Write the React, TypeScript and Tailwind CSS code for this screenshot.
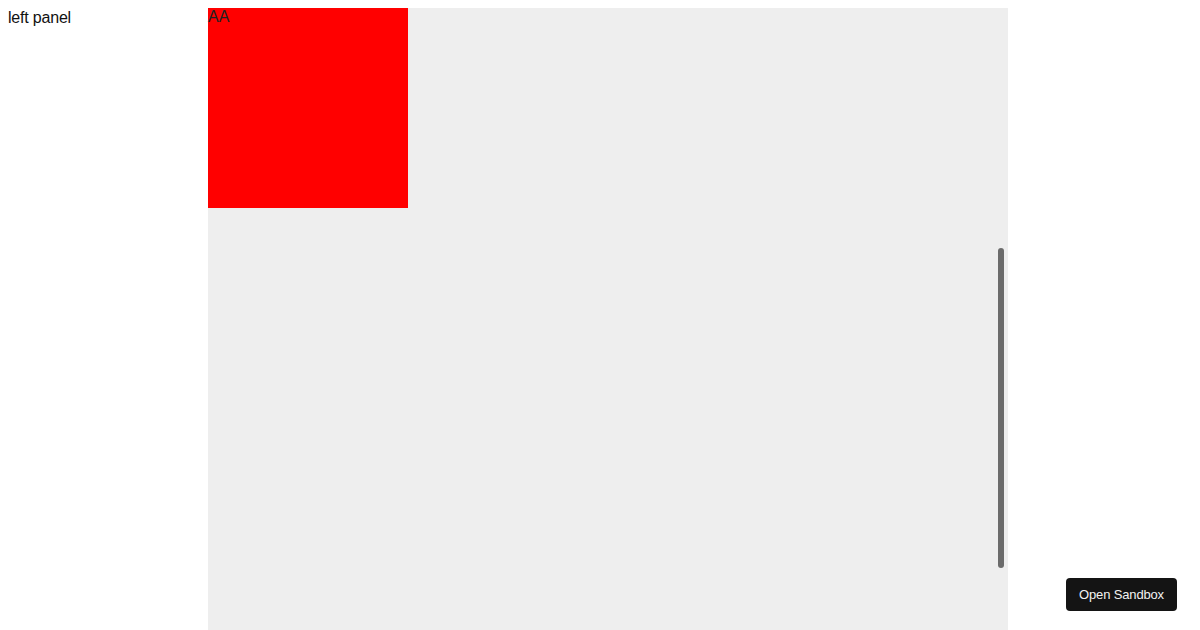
export default function App() {
  return (
    <div className="relative h-[630px] overflow-hidden bg-white font-['Liberation_Sans',Arial,sans-serif] text-[16px] leading-[18px] text-[#111]">
      <div className="flex p-2 pb-0">
        <div className="w-[200px] shrink-0 pt-[1px] tracking-[-0.2px]">left panel</div>
        <div className="relative h-[700px] w-[800px] shrink-0 bg-[#eeeeee]">
          <div className="h-[200px] w-[200px] bg-[#ff0000] text-[#222]">AA</div>
          <div className="absolute right-[4px] top-[240px] h-[320px] w-[6px] rounded-full bg-[#6b6b6b]" />
        </div>
      </div>
      <button className="absolute bottom-[19px] right-[23px] flex h-[33px] w-[111px] items-center justify-center rounded-[4px] bg-[#141414] text-[13px] tracking-[-0.15px] text-[#f2f2f2]">
        Open Sandbox
      </button>
    </div>
  );
}
